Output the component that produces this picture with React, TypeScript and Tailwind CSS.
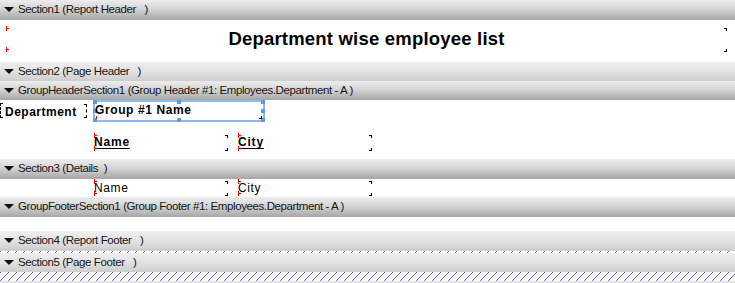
import React from "react";

const Tri = () => (
  <svg width="10" height="6" viewBox="0 0 10 6" className="shrink-0">
    <polygon points="0,0 10,0 5,5" fill="#111" />
  </svg>
);

function Band({ label, dark = true, h = "h-[20px]" }: { label: string; dark?: boolean; h?: string }) {
  return (
    <div
      className={`${h} flex items-center gap-[4px] pl-[4px] text-[11.5px] tracking-[-0.4px] text-[#151515] ${
        dark
          ? "bg-[linear-gradient(to_bottom,#ededed,#d4d4d4_45%,#a6a6a6)]"
          : "bg-[linear-gradient(to_bottom,#efefef,#e2e2e2_50%,#cdcdcd)]"
      }`}
    >
      <Tri />
      <span className="whitespace-pre leading-none">{label}</span>
    </div>
  );
}

const RedTick = ({ pos }: { pos: "top" | "bottom" }) => (
  <span className={`absolute left-0 ${pos === "top" ? "top-0" : "bottom-0"} w-[3px] h-[5px]`}>
    <span className="absolute left-0 top-0 w-[1px] h-[5px] bg-[#ff0000]" />
    <span className="absolute left-0 top-[2px] w-[3px] h-[1px] bg-[#ff0000]" />
  </span>
);

const BlackCorners = () => (
  <>
    <span className="absolute right-0 top-[2px] w-[3px] h-[3px] border-t border-r border-black" />
    <span className="absolute right-0 bottom-[0px] w-[3px] h-[3px] border-b border-r border-black" />
  </>
);

function Field({
  w,
  h,
  children,
  className = "",
}: {
  w: string;
  h: string;
  children?: React.ReactNode;
  className?: string;
}) {
  return (
    <div className={`relative ${w} ${h} shrink-0 ${className}`}>
      <RedTick pos="top" />
      <RedTick pos="bottom" />
      <BlackCorners />
      {children}
    </div>
  );
}

const Handle = ({ c }: { c: string }) => <span className={`absolute w-[4px] h-[4px] bg-[#5b9be6] ${c}`} />;

export default function App() {
  return (
    <div className="w-[735px] h-[283px] overflow-hidden bg-white font-['Liberation_Sans',Arial,sans-serif]">
      <Band label="Section1 (Report Header   )" />
      <div className="h-[42px] flex items-start pt-[6px] pl-[6px]">
        <Field w="w-[721px]" h="h-[26px]" className="flex items-center justify-center">
          <span className="text-[18.5px] font-bold tracking-[0.2px] text-black leading-none">
            Department wise employee list
          </span>
        </Field>
      </div>
      <Band label="Section2 (Page Header   )" dark={false} h="h-[19px]" />
      <Band label="GroupHeaderSection1 (Group Header #1: Employees.Department - A )" h="h-[19px]" />
      <div className="h-[59px] flex flex-col">
        <div className="flex items-start">
          <div className="relative w-[87px] h-[17px] mt-[3px] flex items-center pl-[5px]">
            <span className="absolute left-0 top-0 w-[3px] h-[15px] border-l border-t border-b border-dashed border-black" />
            <span className="absolute right-0 top-[1px] w-[3px] h-[14px] border-r border-t border-b border-dashed border-black" />
            <span className="text-[12px] font-bold tracking-[0.5px] text-black leading-none">Department</span>
          </div>
          <div className="relative ml-[6px] w-[172px] h-[22px] border-2 border-[#8cbaf0]">
            <Handle c="-left-[2px] -top-[2px]" />
            <Handle c="left-[82px] -top-[2px]" />
            <Handle c="-right-[2px] -top-[2px]" />
            <Handle c="-left-[2px] top-[7px]" />
            <Handle c="-right-[2px] top-[7px]" />
            <Handle c="-left-[2px] -bottom-[2px]" />
            <Handle c="left-[82px] -bottom-[2px]" />
            <Handle c="-right-[2px] -bottom-[2px]" />
            <span className="absolute left-[1px] bottom-[1px] w-[1px] h-[3px] bg-[#ff0000]" />
            <span className="absolute right-[1px] bottom-[1px] w-[3px] h-[3px] border-b border-r border-black" />
            <span className="absolute left-[0px] top-[2px] text-[12px] font-bold tracking-[0.6px] text-black leading-none">
              Group #1 Name
            </span>
          </div>
        </div>
        <div className="flex mt-[11px] pl-[94px]">
          <Field w="w-[134px]" h="h-[18px]" className="flex items-end">
            <span className="text-[12px] font-bold tracking-[0.8px] underline underline-offset-[2px] text-black leading-none mb-[3px]">
              Name
            </span>
          </Field>
          <div className="w-[10px]" />
          <Field w="w-[134px]" h="h-[18px]" className="flex items-end">
            <span className="text-[12px] font-bold tracking-[0.8px] underline underline-offset-[2px] text-black leading-none mb-[3px]">
              City
            </span>
          </Field>
        </div>
      </div>
      <Band label="Section3 (Details  )" />
      <div className="h-[18px] flex pl-[94px]">
        <Field w="w-[134px]" h="h-[17px]" className="flex items-center">
          <span className="text-[12px] tracking-[0.6px] text-black leading-none">Name</span>
        </Field>
        <div className="w-[10px]" />
        <Field w="w-[134px]" h="h-[17px]" className="flex items-center">
          <span className="text-[12px] tracking-[0.6px] text-black leading-none">City</span>
        </Field>
      </div>
      <Band label="GroupFooterSection1 (Group Footer #1: Employees.Department - A )" />
      <div className="h-[14px]" />
      <Band label="Section4 (Report Footer   )" dark={false} />
      <div className="h-[2px] bg-[repeating-linear-gradient(135deg,#6b5fd0_0px,#6b5fd0_1px,transparent_1px,transparent_5.66px)]" />
      <Band label="Section5 (Page Footer   )" dark={false} h="h-[19px]" />
      <div className="h-[9px] bg-[repeating-linear-gradient(135deg,#6b5fd0_0px,#6b5fd0_1px,transparent_1px,transparent_5.66px)]" />
      <div className="h-[2px] bg-[#e4e4e4]" />
    </div>
  );
}
